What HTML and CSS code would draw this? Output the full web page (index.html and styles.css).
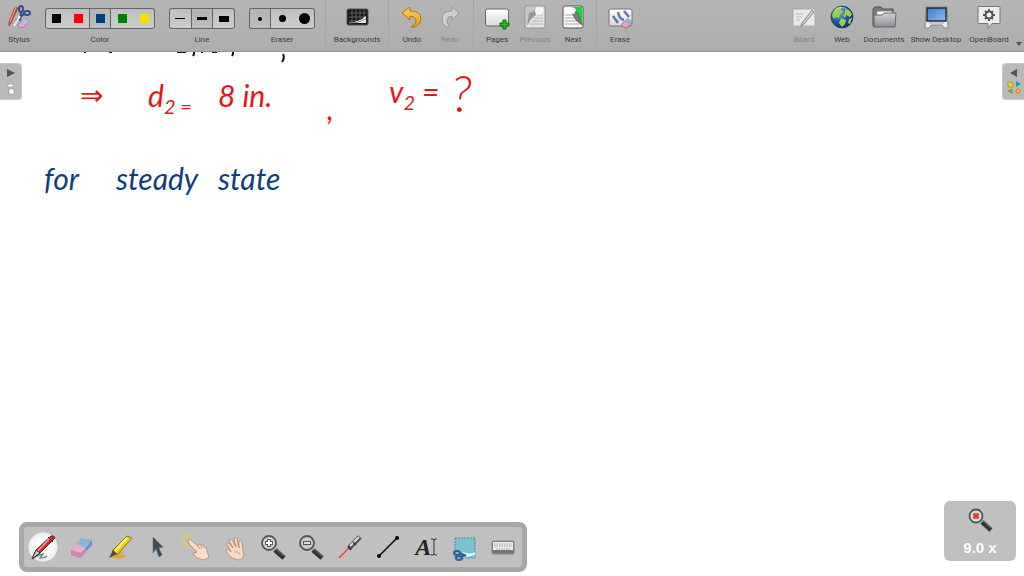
FILE: index.html
```html
<!DOCTYPE html>
<html lang="en">
<head>
<meta charset="utf-8">
<meta name="viewport" content="width=device-width, initial-scale=1">
<title>OpenBoard</title>
<link rel="stylesheet" href="styles.css">
</head>
<body>
<svg class="defs" aria-hidden="true">
  <defs>
    <linearGradient id="glass" x1="0" y1="0" x2="0" y2="1"><stop offset="0" stop-color="#fff"/><stop offset="1" stop-color="#d8d8d8"/></linearGradient>
    <linearGradient id="gold" x1="0" y1="0" x2="0" y2="1"><stop offset="0" stop-color="#ffd65c"/><stop offset="1" stop-color="#e79a12"/></linearGradient>
    <linearGradient id="screen" x1="0" y1="0" x2="1" y2="1"><stop offset="0" stop-color="#3c78c8"/><stop offset="1" stop-color="#8dbcf2"/></linearGradient>
    <radialGradient id="sea" cx=".35" cy=".3" r=".75"><stop offset="0" stop-color="#75b5f5"/><stop offset=".5" stop-color="#2360b4"/><stop offset="1" stop-color="#0c2a66"/></radialGradient>
    <linearGradient id="folder" x1="0" y1="0" x2="0" y2="1"><stop offset="0" stop-color="#d2d2d6"/><stop offset="1" stop-color="#8d8d94"/></linearGradient>
  </defs>
</svg>
<header class="toolbar">
  <button class="tool stylus">
    <svg width="26" height="26" viewBox="0 0 26 26"><g fill="none" stroke="#344f8a" stroke-width="2"><ellipse cx="15" cy="5" rx="2" ry="3"/><ellipse cx="21" cy="9" rx="3" ry="2"/><path d="M10 17l9-8M15 8l-1 9"/></g><path d="M14 12l-6 10" stroke="#e8edf5" stroke-width="2"/><path d="M9 3l3 1-7 15-2 3v-4z" fill="#d8453b" stroke="#8c3030" stroke-width=".6"/><path d="M10 3l-6 15" stroke="#f5aaa3"/><path d="M12 21l6-6 5 2-5 6-5 1z" fill="#eaa6c8" stroke="#8c6f91" stroke-width=".7"/><path d="M16 17l2-2 5 2-3 3z" fill="#a9c6ef"/></svg>
    <span>Stylus</span>
  </button>
  <fieldset class="choice">
    <div class="segments">
      <label class="seg"><input type="radio" name="color" aria-label="Black"><i class="swatch black"></i></label>
      <label class="seg"><input type="radio" name="color" aria-label="Red"><i class="swatch red"></i></label>
      <label class="seg"><input type="radio" name="color" aria-label="Blue" checked><i class="swatch blue"></i></label>
      <label class="seg"><input type="radio" name="color" aria-label="Green"><i class="swatch green"></i></label>
      <label class="seg"><input type="radio" name="color" aria-label="Yellow"><i class="swatch yellow"></i></label>
    </div>
    <legend>Color</legend>
  </fieldset>
  <fieldset class="choice">
    <div class="segments">
      <label class="seg"><input type="radio" name="line" aria-label="Thin line"><i class="line thin"></i></label>
      <label class="seg"><input type="radio" name="line" aria-label="Medium line" checked><i class="line medium"></i></label>
      <label class="seg"><input type="radio" name="line" aria-label="Thick line"><i class="line thick"></i></label>
    </div>
    <legend>Line</legend>
  </fieldset>
  <fieldset class="choice">
    <div class="segments">
      <label class="seg"><input type="radio" name="eraser" aria-label="Small eraser" checked><i class="dot small"></i></label>
      <label class="seg"><input type="radio" name="eraser" aria-label="Medium eraser"><i class="dot mid"></i></label>
      <label class="seg"><input type="radio" name="eraser" aria-label="Large eraser"><i class="dot large"></i></label>
    </div>
    <legend>Eraser</legend>
  </fieldset>
  <div class="group">
    <button class="tool wide">
      <svg width="26" height="26" viewBox="0 0 26 26"><rect x="3" y="5" width="21" height="16" rx="1.5" fill="#181818" stroke="#555"/><path d="M5 9h17M5 13h17M5 17h17M8 6v13M12 6v13M16 6v13M20 6v13" stroke="#777" stroke-width=".7"/><path d="M5 19q10-1 17-7v7z" fill="#eee"/><path d="M5 19q10 0 17-4" fill="none" stroke="#888"/></svg>
      <span>Backgrounds</span>
    </button>
  </div>
  <div class="group">
    <button class="tool">
      <svg width="26" height="26" viewBox="0 0 26 26"><path d="M3 9l8-6v4q11 0 11 8 0 5-6 8h-4q6-4 5-7-1-4-6-4v4z" fill="url(#gold)" stroke="#ad7318"/></svg>
      <span>Undo</span>
    </button>
    <button class="tool" disabled>
      <svg width="26" height="26" viewBox="0 0 26 26"><path d="M22 9l-7-6v4Q5 7 5 15q0 5 4 8h4q-4-4-3-7 1-4 5-4v4z" fill="#d0d0d0" stroke="#999"/></svg>
      <span>Redo</span>
    </button>
  </div>
  <div class="group">
    <button class="tool">
      <svg width="26" height="26" viewBox="0 0 26 26"><rect x="1.5" y="5" width="23" height="17" rx="2" fill="url(#glass)" stroke="#666"/><path d="M19 16h3v3h3v3h-3v3h-3v-3h-3v-3h3z" fill="#20b71d" stroke="#126c10"/></svg>
      <span>Pages</span>
    </button>
    <button class="tool" disabled>
      <svg width="26" height="26" viewBox="0 0 26 26"><rect x="3" y="2" width="20" height="22" rx="2" fill="#e4e4e4" stroke="#929292"/><path d="M4 3h10L4 21z" fill="#c6c6c6"/><path d="M7 9q5-1 7-5v7l-5 4-4 7z" fill="#989898"/><path d="M12 14h9M10 17h11M8 20h13M15 11h6" stroke="#b8b8b8"/><circle cx="17" cy="7" r="4" fill="#f4f4f4"/></svg>
      <span>Previous</span>
    </button>
    <button class="tool">
      <svg width="26" height="26" viewBox="0 0 26 26"><rect x="3" y="2" width="20" height="22" rx="2" fill="#f7f7f7" stroke="#555"/><path d="M12 3h10v18z" fill="#13d928"/><path d="M5 11h8M5 14h10M5 17h13M5 20h15" stroke="#aaa"/><path d="M12 9l5-1 5 13q-7-4-10-12z" fill="#77817c" stroke="#535953" stroke-width=".7"/><path d="M7 5q7-4 9 1l-2 4-5-1z" fill="#fff"/></svg>
      <span>Next</span>
    </button>
  </div>
  <div class="group">
    <button class="tool">
      <svg width="26" height="26" viewBox="0 0 26 26"><rect x="2" y="5" width="23" height="17" rx="2" fill="url(#glass)" stroke="#777"/><path d="M6 12l5 7M11 8q1 7 6 8M17 7l5 6" stroke="#647ba7" stroke-width="2.5" fill="none"/><path d="M14 21l6-6 5 3-5 6-4-1z" fill="#ed9dbd" stroke="#8c5d78" stroke-width=".7"/><path d="M18 17l3-3 4 3-3 4z" fill="#95afe0"/></svg>
      <span>Erase</span>
    </button>
  </div>
  <nav class="modes">
    <button class="tool" disabled>
      <svg width="26" height="26" viewBox="0 0 26 26"><rect x="2" y="5" width="22" height="17" rx="1" fill="#e8e8e8" stroke="#aaa"/><path d="M5 10h7M5 13h6M5 16h4" stroke="#bbb"/><path d="M11 19l10-13 2 2-10 12-3 2z" fill="#ccc" stroke="#777" stroke-width=".8"/></svg>
      <span>Board</span>
    </button>
    <button class="tool">
      <svg width="26" height="26" viewBox="0 0 26 26"><circle cx="13" cy="13" r="11" fill="url(#sea)" stroke="#173360" stroke-width=".7"/><path d="M4 8q4-6 9-5l-1 3 3 2-4 2-1 4-3-1-2 2-2-3zM16 4q5 2 7 6l-2 3-4-2-1 3-2-3 2-2zM12 14l5 2-1 4-3 3-3-4zM20 15l3-1-2 6-2-1z" fill="#9bd044"/><path d="M6 6q5-4 10-2" fill="none" stroke="#e6f3ff" opacity=".6"/></svg>
      <span>Web</span>
    </button>
    <button class="tool documents">
      <svg width="26" height="26" viewBox="0 0 26 26"><path d="M2 22V5l2-2h6l2 2h10v17z" fill="#777b80" stroke="#54575c"/><path d="M6 7h15l1 13H5z" fill="#fff" stroke="#888"/><path d="M3 11h8l2-2h12l-1 14H3z" fill="url(#folder)" stroke="#64666b"/></svg>
      <span>Documents</span>
    </button>
    <button class="tool desktop">
      <svg width="26" height="26" viewBox="0 0 26 26"><path d="M3 3h21l1 21h-4l-2-3H8l-2 3H2z" fill="#ececec" stroke="#888"/><rect x="4" y="4" width="19" height="13" fill="url(#screen)" stroke="#252c36" stroke-width="1.500"/><path d="M6 19h15" stroke="#aaa"/></svg>
      <span>Show Desktop</span>
    </button>
    <button class="tool openboard">
      <svg width="26" height="26" viewBox="0 0 26 26"><path d="M3 2.500h20q1 0 1 1v15q0 1-1 1h-7l-4 5v-5H3q-1 0-1-1v-15q0-1 1-1z" fill="#eee" stroke="#777"/><circle cx="13" cy="11" r="3.500" fill="none" stroke="#555" stroke-width="2"/><path d="M13 5v3M13 14v3M7 11h3M16 11h3M9 7l2 2M17 7l-2 2M9 15l2-2M17 15l-2-2" stroke="#555" stroke-width="1.800"/></svg>
      <span>OpenBoard</span>
    </button>
    <button class="more" aria-label="More"><i></i></button>
  </nav>
</header>
<main class="board">
  <svg class="ink-ends" width="230" height="12" viewBox="0 0 230 12" aria-hidden="true"><g fill="none" stroke="#111" stroke-width="2"><path d="M25 0v1M49 0h3M117 0h9M134 0v2l-1 2M142 0v1M152 0h5M173 0v2l-1 2M223 2q2 4-1 8"/></g></svg>
  <p class="ink red-ink implies">⇒</p>
  <p class="ink red-ink diameter">d<sub>2 =</sub></p>
  <p class="ink red-ink inches">8 in.</p>
  <p class="ink red-ink comma">,</p>
  <p class="ink red-ink velocity">v<sub>2</sub> =</p>
  <p class="ink red-ink unknown">?</p>
  <p class="ink blue-ink word-for">for</p>
  <p class="ink blue-ink word-steady">steady</p>
  <p class="ink blue-ink word-state">state</p>
  <button class="drawer left" aria-label="Open page navigator">
    <svg width="21" height="35" viewBox="0 0 21 35"><path d="M7 5l8 4-8 4z" fill="#555"/><path d="M8 18h5v1H8zM8 20h5v3H8zM9 25h5v5H9z" fill="#fff" stroke="#999" stroke-width=".6"/></svg>
  </button>
  <button class="drawer right" aria-label="Open library">
    <svg width="21" height="35" viewBox="0 0 21 35"><path d="M14 5L7 9l7 4z" fill="#555"/><path d="M5 18h2l1 1h2v4H5z" fill="#f4d022" stroke="#a68d16" stroke-width=".6"/><path d="M13 17l5 3-5 3z" fill="#1b9cc3"/><path d="M5 27l4-2v4z" fill="#a0b527" stroke="#6e7d18" stroke-width=".6"/><circle cx="15" cy="27" r="1.800" fill="#ffcf72" stroke="#ed8928" stroke-width="1.500"/></svg>
  </button>
  <div class="palette" role="toolbar" aria-label="Drawing tools">
    <button aria-label="Pen" class="active"><svg width="30" height="30" viewBox="0 0 30 30"><path d="M5 26q8-4 10-4l-3 4q5 0 7-2" fill="none" stroke="#72858b" stroke-width="1.500"/><path d="M23 4q3-1 4 2L12 21l-8 6 4-9z" fill="#d9251f" stroke="#562525"/><path d="M22 6L9 20" stroke="#ff9990" stroke-width="1.500"/><path d="M8 18l4 3-8 6z" fill="#ccc" stroke="#333"/><path d="M20 5l5 5" stroke="#333"/></svg></button>
    <button aria-label="Eraser"><svg width="30" height="30" viewBox="0 0 30 30"><path d="M5 18L15 6l11 2v5L14 26 5 23z" fill="#c788ab"/><path d="M5 18L15 6l11 2-11 13z" fill="#f3a9cb"/><path d="M10 12l5-6 11 2-6 8z" fill="#85b7dc"/><path d="M20 16l6-8v5L14 26l1-5z" fill="#718fc3"/><path d="M15 21l5-5v4l-6 6z" fill="#d584ac"/></svg></button>
    <button aria-label="Marker"><svg width="30" height="30" viewBox="0 0 30 30"><path d="M4 25q9-5 15-5l-5 3q6-1 8 1l-8 3-5-1z" fill="#e6a72a"/><path d="M22 4l5 2-14 16-6 1 1-5z" fill="#efcf12" stroke="#82711c"/><path d="M22 6L10 19" stroke="#fff171" stroke-width="2"/><path d="M8 18l4 4-8 4z" fill="#504c3a"/></svg></button>
    <button aria-label="Select"><svg width="30" height="30" viewBox="0 0 30 30"><path d="M10 5l10 10-4 1 3 7-3 2-3-8-3 4z" fill="#414b58" stroke="#6c747f" stroke-width=".6"/></svg></button>
    <button aria-label="Interact"><svg width="30" height="30" viewBox="0 0 30 30"><path d="M6 1v5M1 3l3 3M11 2l-2 4M0 9h4M2 14l2-3M6 12v4" stroke="#e5ce57" stroke-width="1.500"/><path d="M7 8q2-2 3 0l7 6q0-3 3-1 3-1 3 2 3 0 3 3l2 8-6 2q-7-1-10-6-1-2 3-1l1-1-8-8z" fill="#f6ddc9" stroke="#b58566" stroke-width=".8"/><path d="M17 14l2 3M20 13l1 4" stroke="#c49b80"/></svg></button>
    <button aria-label="Scroll page"><svg width="30" height="30" viewBox="0 0 30 30"><path d="M12 26q-6-5-6-8 0-2 2-1l3 3-4-8q0-2 2-1l4 5-4-8q1-2 3 0l4 7-2-9q2-2 3 1l2 9v-7q2-2 3 1l1 9 1 4-2 4-4 1z" fill="#f4dbc8" stroke="#b18468" stroke-width=".8"/><path d="M14 20q4-1 6 2" fill="none" stroke="#c79b80"/></svg></button>
    <button aria-label="Zoom in"><svg width="30" height="30" viewBox="0 0 30 30"><path d="M17 18l9 8" stroke="#333" stroke-width="5"/><path d="M18 17l8 7" stroke="#777" stroke-width="1"/><circle cx="11" cy="11" r="7" fill="#d6d9db" stroke="#50565a" stroke-width="1.800"/><path d="M7 11h8M11 7v8" stroke="#555" stroke-width="4"/><path d="M8 11h6M11 8v6" stroke="#fff" stroke-width="2"/></svg></button>
    <button aria-label="Zoom out"><svg width="30" height="30" viewBox="0 0 30 30"><path d="M17 18l9 8" stroke="#333" stroke-width="5"/><path d="M18 17l8 7" stroke="#777" stroke-width="1"/><circle cx="11" cy="11" r="7" fill="#c9cccd" stroke="#50565a" stroke-width="1.800"/><path d="M7 11h8" stroke="#555" stroke-width="4"/><path d="M8 11h6" stroke="#ddd" stroke-width="2"/></svg></button>
    <button aria-label="Laser pointer"><svg width="30" height="30" viewBox="0 0 30 30"><path d="M4 26l10-10" stroke="#ee8c7f" stroke-width="2.500"/><path d="M4 26l9-9" stroke="#d5382e"/><path d="M14 16L25 5" stroke="#555" stroke-width="5"/><path d="M15 14l9-9" stroke="#ddd" stroke-width="2"/><path d="M13 15l3 3M18 10l3 3" stroke="#333" stroke-width="1.500"/></svg></button>
    <button aria-label="Line"><svg width="30" height="30" viewBox="0 0 30 30"><path d="M6 24L24 6" stroke="#000" stroke-width="1.500"/><circle cx="6" cy="24" r="2"/><circle cx="24" cy="6" r="2"/></svg></button>
    <button aria-label="Text" class="text-tool"><span>A</span><svg width="6" height="18" viewBox="0 0 6 18"><path d="M0 1h2l1 1 1-1h2M3 2v14M0 17h2l1-1 1 1h2" fill="none" stroke="#333"/></svg></button>
    <button aria-label="Capture"><svg width="30" height="30" viewBox="0 0 30 30"><path d="M5 6h20v20H5z" fill="#79c3d1" stroke="#468bab" stroke-dasharray="2 1"/><path d="M12 21q8 3 13 0M12 25l13-3" stroke="#e4f2fa" stroke-width="2" fill="none"/><g fill="none" stroke="#315b9c" stroke-width="2"><ellipse cx="7" cy="21" rx="3" ry="2"/><ellipse cx="9" cy="26" rx="3" ry="2"/><path d="M10 21l6 3M11 25l5-2"/></g></svg></button>
    <button aria-label="Virtual keyboard"><svg width="30" height="30" viewBox="0 0 30 30"><rect x="4" y="9" width="22" height="13" rx="1" fill="#777" stroke="#888"/><rect x="5" y="10" width="20" height="8" fill="#eee"/><path d="M6 12h18M6 14h18M8 17h14" stroke="#999" stroke-width="1" stroke-dasharray="1.500 1"/></svg></button>
  </div>
  <button class="zoom">
    <svg width="30" height="30" viewBox="0 0 30 30"><path d="M17 17l9 8" stroke="#333" stroke-width="4.500"/><path d="M18 16l8 7" stroke="#777"/><circle cx="11" cy="11" r="6.500" fill="#dce1e2" stroke="#50565a" stroke-width="1.800"/><path d="M8.500 8.500l5 5M13.500 8.500l-5 5" stroke="#e73b35" stroke-width="3"/></svg>
    <span>9.0 x</span>
  </button>
</main>
</body>
</html>
```

FILE: styles.css
```css
* { box-sizing: border-box; }
body {
  margin: 0;
  min-height: 100vh;
  display: flex;
  flex-direction: column;
  background: #fff;
  font-family: Roboto, "Noto Sans", sans-serif;
  overflow: hidden;
}
button { border: 0; padding: 0; background: none; color: inherit; font: inherit; }
svg { display: block; flex: none; }
.defs { position: absolute; width: 0; height: 0; }
.toolbar {
  display: flex;
  align-items: stretch;
  height: 52px;
  background: linear-gradient(#b5b5b5, #adadad);
  border-bottom: 1px solid #969696;
  color: #3c3c3c;
  font-size: 8px;
  line-height: 12px;
}
.tool {
  width: 38px;
  padding-top: 4px;
  display: flex;
  flex-direction: column;
  align-items: center;
  gap: 4px;
  white-space: nowrap;
}
.tool:disabled { color: #858585; }
.tool.wide { width: 54px; }
.tool.documents { width: 46px; }
.tool.desktop { width: 58px; }
.tool.openboard { width: 48px; }
.choice {
  border: 0;
  margin: 0 7px;
  padding: 8px 0 0;
  min-width: 0;
  position: relative;
}
.choice legend {
  position: absolute;
  top: 34px;
  width: 100%;
  padding: 0;
  text-align: center;
}
.segments {
  display: flex;
  border-radius: 3px;
  overflow: hidden;
  box-shadow: inset 0 0 0 1px #666;
  background: linear-gradient(#bebebe, #cdcdcd);
}
.seg {
  position: relative;
  display: grid;
  place-items: center;
  width: 22px;
  height: 21px;
}
.seg input { position: absolute; inset: 0; margin: 0; opacity: 0; }
.seg:has(:checked) { background: #adadad88; box-shadow: inset 0 0 0 1px #666; }
.swatch { width: 9px; height: 9px; }
.black { background: #000; }
.red { background: #f00; }
.blue { background: #004080; }
.green { background: #008000; }
.yellow { background: #ffdc00; }
.line { width: 10px; background: #000; }
.thin { height: 1px; }
.medium { height: 3px; }
.thick { height: 6px; }
.dot { border-radius: 50%; background: #000; }
.small { width: 4px; height: 4px; }
.mid { width: 7px; height: 7px; }
.large { width: 11px; height: 11px; }
.group {
  display: flex;
  padding: 0 4px;
  border-left: 1px solid #a5a5a5;
}
.choice + .group { margin-left: 3px; }
.modes { margin-left: auto; display: flex; }
.more { width: 11px; display: flex; align-items: flex-end; justify-content: center; padding-bottom: 5px; }
.more i { border: 3px solid transparent; border-top: 4px solid #555; border-bottom: 0; }

.board { position: relative; flex: 1; }
.ink-ends { position: absolute; left: 60px; top: 0; }
.ink {
  position: absolute;
  margin: 0;
  font: italic 30px/36px Lato, sans-serif;
  white-space: pre;
}
.ink sub { font-size: 20px; line-height: 1; }
.red-ink { color: #e8141c; }
.blue-ink { color: #0d3f7e; }
.implies { left: 80px; top: 28px; font: 28px/32px "DejaVu Sans", sans-serif; }
.diameter { left: 148px; top: 25px; }
.inches { left: 218px; top: 25px; }
.comma { left: 327px; top: 38px; }
.velocity { left: 389px; top: 21px; }
.unknown { left: 451px; top: 10px; font-size: 52px; font-weight: 300; line-height: 60px; }
.word-for { left: 44px; top: 108px; }
.word-steady { left: 116px; top: 108px; }
.word-state { left: 218px; top: 108px; }

.drawer {
  position: absolute;
  top: 11px;
  background: #b9b9b9;
  border: 1px solid #c8c8c8;
}
.drawer.left { left: 0; border-left: 0; border-radius: 0 4px 4px 0; }
.drawer.right { right: 0; border-right: 0; border-radius: 4px 0 0 4px; }
.palette {
  position: absolute;
  left: 19px;
  bottom: 4px;
  width: 508px;
  display: flex;
  justify-content: space-between;
  padding: 5px 0;
  border: 5px solid #a8a8a8;
  border-radius: 8px;
  background: #c0c0c0;
}
.palette button { width: 38px; height: 30px; display: flex; align-items: center; justify-content: center; }
.palette .active { background: radial-gradient(circle, #fff 6px, #eee 14px, transparent 15px); }
.text-tool span { font: italic bold 24px/30px "Liberation Serif", serif; color: #222; }
.zoom {
  position: absolute;
  right: 8px;
  bottom: 15px;
  width: 72px;
  padding: 4px 0;
  border-radius: 6px;
  background: #c0c0c0;
  display: flex;
  flex-direction: column;
  align-items: center;
  gap: 4px;
  color: #fff;
  font: bold 15px/18px "Liberation Sans", sans-serif;
}
```
